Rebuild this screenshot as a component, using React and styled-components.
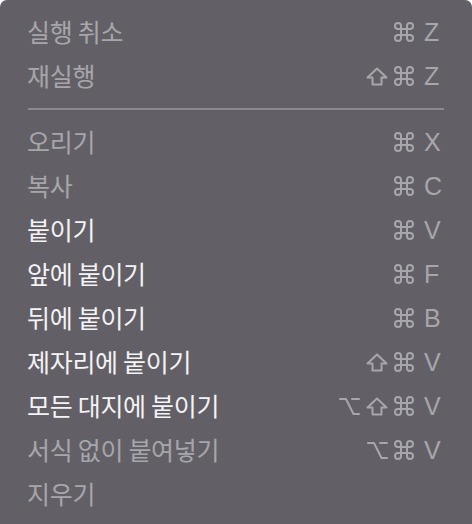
import React from "react";
import styled, { createGlobalStyle } from "styled-components";

const GlobalStyle = createGlobalStyle`
  html, body {
    margin: 0;
    padding: 0;
    background: #ffffff;
  }
  body {
    font-family: "Noto Sans CJK KR", "Noto Sans", sans-serif;
  }
`;

const Menu = styled.div`
  width: 472px;
  height: 524px;
  box-sizing: border-box;
  background: #626066;
  border-radius: 7px 7px 0 0;
  padding: 10px 0 0;
  display: flex;
  flex-direction: column;
`;

const Row = styled.div`
  height: 44px;
  display: flex;
  align-items: center;
  justify-content: space-between;
  padding: 0 30px 0 27px;
`;

const Label = styled.span`
  font-size: 25px;
  line-height: 1;
  color: ${(p) => (p.disabled ? "#a7a6aa" : "#f4f3f5")};
  letter-spacing: -0.3px;
  margin-top: -2px;
`;

const Shortcut = styled.div`
  display: flex;
  align-items: center;
  gap: 6px;
  color: #a7a6aa;
`;

const Key = styled.span`
  width: 18px;
  margin-left: 4px;
  font-family: "Liberation Sans", Arial, sans-serif;
  font-size: 25px;
  line-height: 1;
  text-align: left;
`;

const Separator = styled.div`
  height: 22px;
  display: flex;
  align-items: center;
  padding: 0 28px 0 28px;

  &::after {
    content: "";
    flex: 1;
    height: 2px;
    background: #8b8a8e;
  }
`;

const Glyph = styled.svg`
  display: block;
  flex: none;
  fill: none;
  stroke: currentColor;
  stroke-width: 2;
  stroke-linecap: round;
  stroke-linejoin: round;
`;

const Cmd = () => (
  <Glyph width="20" height="20" viewBox="2 2 20 20">
    <path d="M15 6v12a3 3 0 1 0 3-3H6a3 3 0 1 0 3 3V6a3 3 0 1 0-3 3h12a3 3 0 1 0-3-3" />
  </Glyph>
);

const Shift = () => (
  <Glyph width="22" height="19" viewBox="0 0 22 19">
    <path d="M11 1.5 L20.5 10.5 H15.5 V17.5 H6.5 V10.5 H1.5 Z" />
  </Glyph>
);

const Opt = () => (
  <Glyph width="21" height="19" viewBox="0 0 21 19">
    <path d="M1 2h6l7.5 15H20" />
    <path d="M13 2h7" />
  </Glyph>
);

const icons = { opt: Opt, shift: Shift, cmd: Cmd };

const items = [
  { label: "실행 취소", mods: ["cmd"], key: "Z", disabled: true },
  { label: "재실행", mods: ["shift", "cmd"], key: "Z", disabled: true },
  "sep",
  { label: "오리기", mods: ["cmd"], key: "X", disabled: true },
  { label: "복사", mods: ["cmd"], key: "C", disabled: true },
  { label: "붙이기", mods: ["cmd"], key: "V" },
  { label: "앞에 붙이기", mods: ["cmd"], key: "F" },
  { label: "뒤에 붙이기", mods: ["cmd"], key: "B" },
  { label: "제자리에 붙이기", mods: ["shift", "cmd"], key: "V" },
  { label: "모든 대지에 붙이기", mods: ["opt", "shift", "cmd"], key: "V" },
  { label: "서식 없이 붙여넣기", mods: ["opt", "cmd"], key: "V", disabled: true },
  { label: "지우기", mods: [], key: "", disabled: true },
];

export default function App() {
  return (
    <>
      <GlobalStyle />
      <Menu>
        {items.map((it, i) =>
          it === "sep" ? (
            <Separator key={i} />
          ) : (
            <Row key={i}>
              <Label disabled={it.disabled}>{it.label}</Label>
              {it.key && (
                <Shortcut>
                  {it.mods.map((m) => {
                    const Icon = icons[m];
                    return <Icon key={m} />;
                  })}
                  <Key>{it.key}</Key>
                </Shortcut>
              )}
            </Row>
          )
        )}
      </Menu>
    </>
  );
}
